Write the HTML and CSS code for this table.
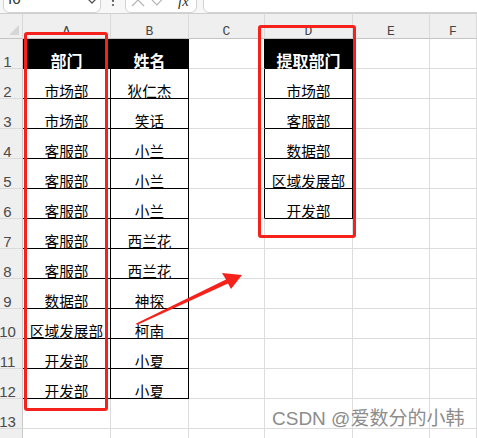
FILE: index.html
```html
<!DOCTYPE html>
<html lang="zh">
<head>
<meta charset="utf-8">
<title>Sheet</title>
<link rel="stylesheet" href="styles.css">
</head>
<body>
<div class="app">
  <div class="toolbar">
    <div class="namebox">
      <span class="nb-text">I6</span>
      <svg class="chev" width="12" height="8" viewBox="0 0 12 8"><polyline points="2,1 6,5 10,1" fill="none" stroke="#555" stroke-width="1.3"/></svg>
    </div>
    <div class="sep">
      <svg width="4" height="13" viewBox="0 0 4 13"><circle cx="2" cy="1" r="1.1" fill="#555"/><circle cx="2" cy="5" r="1.1" fill="#555"/></svg>
    </div>
    <div class="fxbox">
      <svg width="70" height="31" viewBox="0 0 70 31">
        <line x1="6" y1="13" x2="18" y2="25" stroke="#b5b5b5" stroke-width="1.2"/>
        <line x1="18" y1="13" x2="6" y2="25" stroke="#b5b5b5" stroke-width="1.2"/>
        <polyline points="26,19 31,24 39,15" fill="none" stroke="#b5b5b5" stroke-width="1.2"/>
        <text x="52" y="25" class="fx">fx</text>
      </svg>
    </div>
    <div class="formula"></div>
  </div>

  <div class="sheet">
    <div class="corner"><svg width="23" height="24" viewBox="0 0 23 24"><polygon points="19,11 19,21 9,21" fill="#d6d6d6"/></svg></div>
    <div class="ch">A</div><div class="ch">B</div><div class="ch">C</div><div class="ch">D</div><div class="ch">E</div><div class="ch">F</div>

    <div class="rh">1</div>
    <div class="c t h">部门</div><div class="c t h">姓名</div><div class="c tl"></div><div class="c t h">提取部门</div><div class="c"></div><div class="c"></div>

    <div class="rh">2</div>
    <div class="c t">市场部</div><div class="c t">狄仁杰</div><div class="c tl"></div><div class="c t">市场部</div><div class="c"></div><div class="c"></div>

    <div class="rh">3</div>
    <div class="c t">市场部</div><div class="c t">笑话</div><div class="c tl"></div><div class="c t">客服部</div><div class="c"></div><div class="c"></div>

    <div class="rh">4</div>
    <div class="c t">客服部</div><div class="c t">小兰</div><div class="c tl"></div><div class="c t">数据部</div><div class="c"></div><div class="c"></div>

    <div class="rh">5</div>
    <div class="c t">客服部</div><div class="c t">小兰</div><div class="c tl"></div><div class="c t">区域发展部</div><div class="c"></div><div class="c"></div>

    <div class="rh">6</div>
    <div class="c t">客服部</div><div class="c t">小兰</div><div class="c tl"></div><div class="c t">开发部</div><div class="c"></div><div class="c"></div>

    <div class="rh">7</div>
    <div class="c t">客服部</div><div class="c t">西兰花</div><div class="c"></div><div class="c"></div><div class="c"></div><div class="c"></div>

    <div class="rh">8</div>
    <div class="c t">客服部</div><div class="c t">西兰花</div><div class="c"></div><div class="c"></div><div class="c"></div><div class="c"></div>

    <div class="rh">9</div>
    <div class="c t">数据部</div><div class="c t">神探</div><div class="c"></div><div class="c"></div><div class="c"></div><div class="c"></div>

    <div class="rh">10</div>
    <div class="c t">区域发展部</div><div class="c t">柯南</div><div class="c"></div><div class="c"></div><div class="c"></div><div class="c"></div>

    <div class="rh">11</div>
    <div class="c t">开发部</div><div class="c t">小夏</div><div class="c"></div><div class="c"></div><div class="c"></div><div class="c"></div>

    <div class="rh">12</div>
    <div class="c t">开发部</div><div class="c t">小夏</div><div class="c"></div><div class="c"></div><div class="c"></div><div class="c"></div>

    <div class="rh">13</div>
    <div class="c"></div><div class="c"></div><div class="c"></div><div class="c"></div><div class="c"></div><div class="c"></div>

    <div class="rh"></div>
    <div class="c"></div><div class="c"></div><div class="c"></div><div class="c"></div><div class="c"></div><div class="c"></div>
  </div>

  <div class="mark mark-a"></div>
  <div class="mark mark-d"></div>
  <svg class="arrow" width="477" height="438" viewBox="0 0 477 438">
    <polygon points="136,323.5 226,279.5 222,273 242,275 231,289 228,283.5 137,325" fill="#f5221b"/>
  </svg>
  <div class="watermark">CSDN @爱数分的小韩</div>
</div>
</body>
</html>
```

FILE: styles.css
```css
html, body {
  margin: 0;
  padding: 0;
  background: #ffffff;
}

.app {
  position: relative;
  width: 477px;
  height: 438px;
  overflow: hidden;
  font-family: "Noto Sans CJK SC", sans-serif;
}

/* toolbar */
.toolbar {
  display: flex;
  align-items: flex-start;
  height: 13px;
  padding-left: 3px;
  background: #f7f7f7;
  overflow: hidden;
}

.namebox {
  display: flex;
  align-items: flex-end;
  justify-content: space-between;
  box-sizing: border-box;
  width: 98px;
  height: 33px;
  margin-top: -20px;
  padding: 0 2px 5px 4px;
  background: #fff;
  border: 1px solid #d2d2d2;
  border-radius: 6px;
}

.nb-text {
  font-family: "Liberation Sans", sans-serif;
  font-size: 15px;
  line-height: 15px;
  color: #333;
  margin-bottom: 1px;
}

.chev {
  margin-bottom: 1px;
}

.sep {
  width: 24px;
  display: flex;
  justify-content: center;
}

.fxbox {
  box-sizing: border-box;
  width: 72px;
  height: 33px;
  margin-top: -20px;
  background: #fff;
  border: 1px solid #d2d2d2;
  border-radius: 6px;
}

.fxbox svg {
  display: block;
}

.fx {
  font-family: "Liberation Serif", serif;
  font-style: italic;
  font-size: 15px;
  fill: #333;
}

.formula {
  flex: 1;
  height: 33px;
  margin-top: -20px;
  margin-left: 6px;
  margin-right: -10px;
  box-sizing: border-box;
  background: #fff;
  border: 1px solid #d2d2d2;
  border-radius: 6px;
}

/* sheet grid */
.sheet {
  display: grid;
  grid-template-columns: 23px 88px 78px 76px 88px 77px 47px;
  grid-template-rows: 26px repeat(14, 30px);
}

.corner {
  box-sizing: border-box;
  background: #efefef;
  border-top: 1px solid #cfcfcf;
  border-bottom: 1px solid #c4c4c4;
  border-right: 1px solid #d8d8d8;
}

.corner svg {
  display: block;
}

.ch {
  box-sizing: border-box;
  display: flex;
  align-items: flex-end;
  justify-content: center;
  background: #efefef;
  border-top: 1px solid #cfcfcf;
  border-bottom: 1px solid #c4c4c4;
  border-right: 1px solid #dadada;
  font-family: "Liberation Mono", monospace;
  font-size: 13px;
  line-height: 12px;
  color: #444;
}

.rh {
  box-sizing: border-box;
  display: flex;
  align-items: flex-end;
  justify-content: center;
  padding-right: 7px;
  background: #efefef;
  border-right: 1px solid #c9c9c9;
  border-bottom: 1px solid #dadada;
  font-family: "Liberation Sans", sans-serif;
  font-size: 15px;
  line-height: 13px;
  color: #4a4a4a;
  white-space: nowrap;
}

.c {
  box-sizing: border-box;
  display: flex;
  align-items: flex-end;
  justify-content: center;
  border-right: 1px solid #dcdcdc;
  border-bottom: 1px solid #dcdcdc;
  font-size: 14.67px;
  line-height: 15px;
  color: #000;
  white-space: nowrap;
}

.c.t {
  border-right-color: #000;
  border-bottom-color: #000;
}

.c.tl {
  border-right-color: #000;
}

.c.h {
  background: #000;
  color: #fff;
  font-weight: 700;
  font-size: 16px;
  line-height: 16px;
}

/* overlays */
.mark {
  position: absolute;
  box-sizing: border-box;
  border: 3px solid #f5221b;
  border-radius: 3px;
}

.mark-a {
  left: 24px;
  top: 32px;
  width: 84px;
  height: 379px;
}

.mark-d {
  left: 258px;
  top: 25px;
  width: 98px;
  height: 213px;
}

.arrow {
  position: absolute;
  left: 0;
  top: 0;
  pointer-events: none;
}

.watermark {
  position: absolute;
  left: 272px;
  top: 407px;
  font-family: "Liberation Sans", "Noto Sans CJK SC", sans-serif;
  font-size: 19px;
  line-height: 24px;
  color: #8c8c8c;
  text-shadow: 0 0 2px #fff, 0 0 1px #fff;
  white-space: nowrap;
}
```
